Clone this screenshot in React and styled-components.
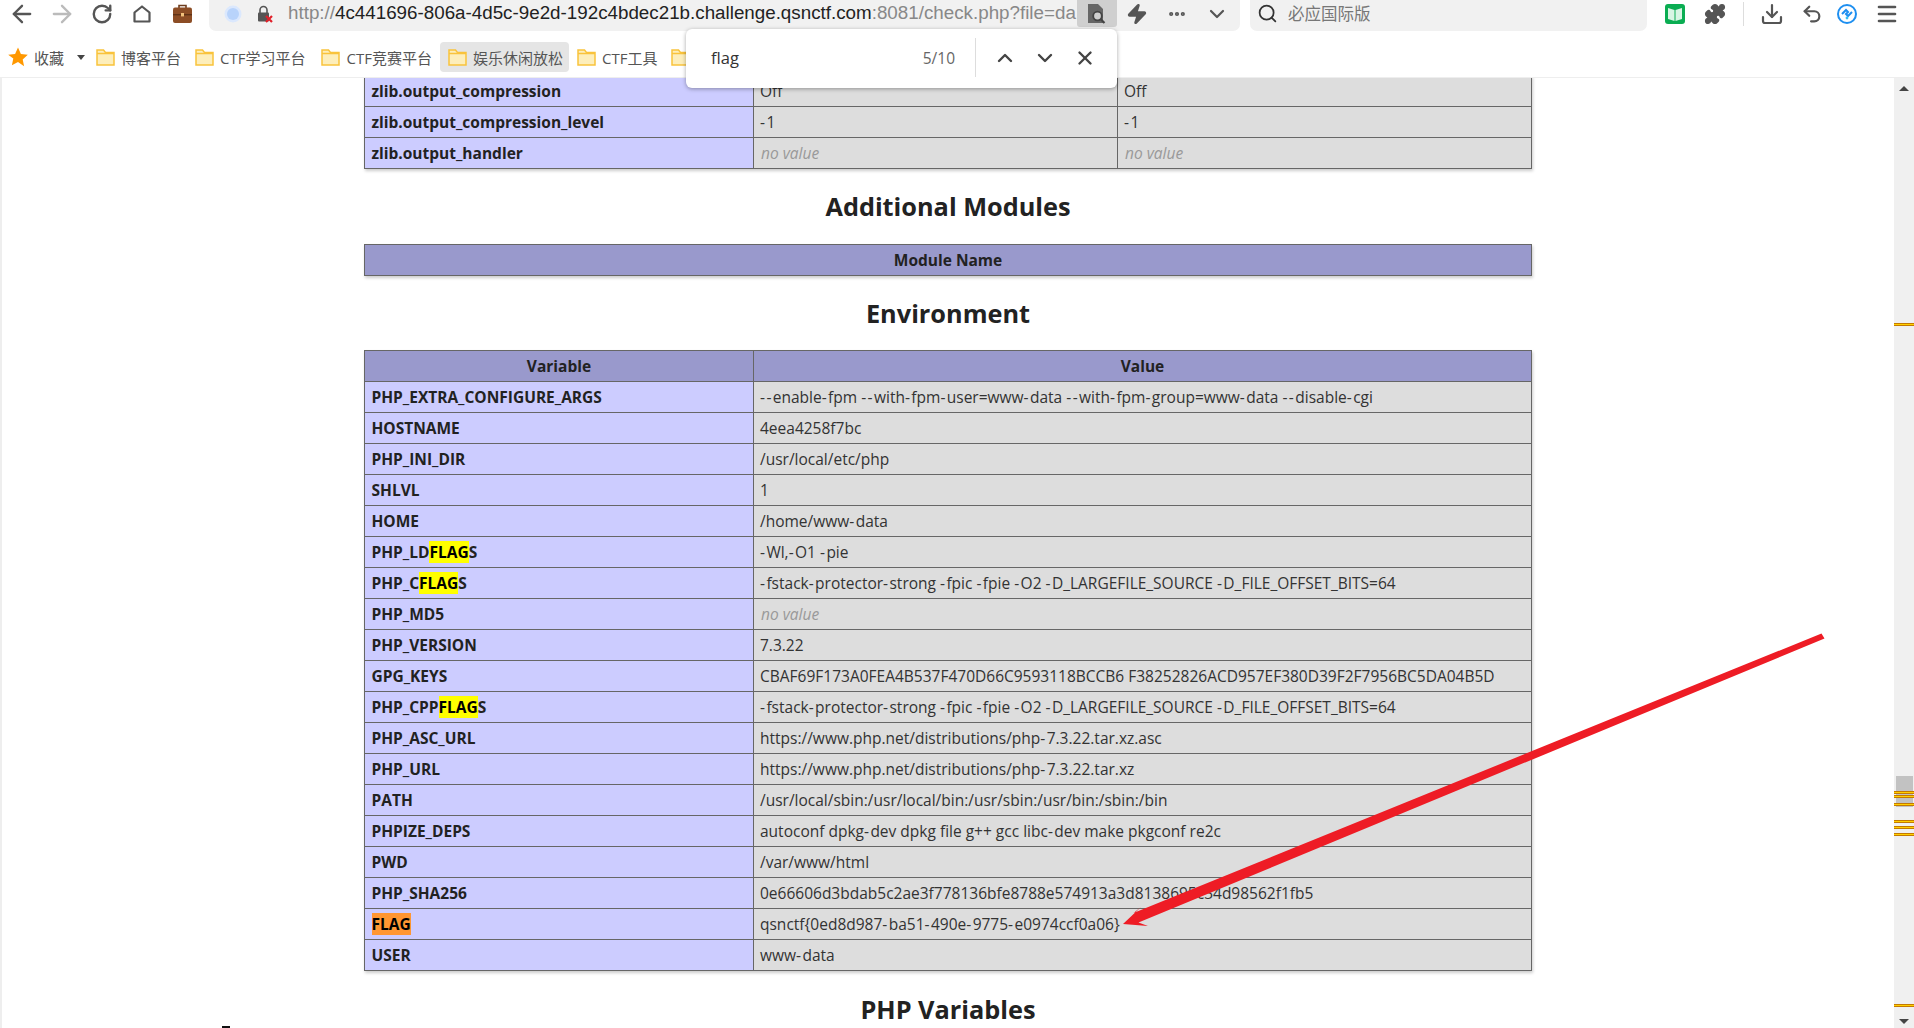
import React from "react";
import styled, { createGlobalStyle } from "styled-components";
import { ArrowLeft, ArrowRight, RotateCw, ChevronUp, ChevronDown, X, Search, Zap, Ellipsis, Download, Undo2, Menu, Puzzle } from "lucide-react";

const GlobalStyle = createGlobalStyle`
  html, body {
    margin: 0;
    height: 100%;
    overflow: hidden;
    background: #fff;
  }
  body {
    font-family: "Open Sans", "Noto Sans CJK SC", sans-serif;
    color: #222;
  }
`;

const Frame = styled.div`
  width: 1914px;
  height: 1028px;
  display: flex;
  flex-direction: column;
  position: relative;
  overflow: hidden;
`;

const Toolbar = styled.div`
  height: 31px;
  display: flex;
  align-items: flex-start;
  flex-shrink: 0;
`;

const NavButton = styled.div`
  width: 40px;
  height: 27px;
  display: flex;
  align-items: center;
  justify-content: center;
  color: ${(p) => p.$color || "#555"};
`;

const NavGroup = styled.div`
  display: flex;
  padding-left: 2px;
  width: 209px;
  box-sizing: border-box;
`;

const AddressBar = styled.div`
  width: 1031px;
  height: 31px;
  background: #f1f1f1;
  border-radius: 0 0 7px 7px;
  display: flex;
  align-items: flex-start;
  flex-shrink: 0;
`;

const SecurityIcons = styled.div`
  width: 79px;
  height: 27px;
  display: flex;
  align-items: center;
  padding-left: 15px;
  gap: 14px;
  box-sizing: border-box;
  flex-shrink: 0;
`;

const UrlText = styled.div`
  width: 789px;
  height: 27px;
  line-height: 26px;
  font-family: "Liberation Sans", sans-serif;
  font-size: 18.8px;
  white-space: nowrap;
  color: #888;
  flex-shrink: 0;
  b {
    font-weight: 400;
    color: #222;
  }
`;

const FindToggle = styled.div`
  width: 40px;
  height: 27px;
  background: #cfcfcf;
  border-radius: 0 0 3px 3px;
  display: flex;
  align-items: center;
  justify-content: center;
`;

const AddressActions = styled.div`
  display: flex;
  align-items: center;
  height: 27px;
  > div {
    width: 40px;
    display: flex;
    justify-content: center;
    color: #555;
  }
`;

const SearchBox = styled.div`
  width: 397px;
  height: 31px;
  margin-left: 10px;
  background: #f1f1f1;
  border-radius: 0 0 7px 7px;
  display: flex;
  align-items: flex-start;
  padding-left: 7px;
  box-sizing: border-box;
  gap: 10px;
  font-size: 16.5px;
  color: #777;
  line-height: 27px;
  flex-shrink: 0;
  svg {
    margin-top: 3px;
    color: #333;
  }
`;

const ExtensionIcons = styled.div`
  display: flex;
  align-items: center;
  height: 27px;
  padding-left: 8px;
  color: #555;
`;

const ExtensionSlot = styled.div`
  width: ${(p) => p.$width || 40}px;
  display: flex;
  justify-content: center;
`;

const Separator = styled.div`
  width: 1px;
  height: 24px;
  background: #ddd;
`;

const Bookmarks = styled.div`
  height: 47px;
  box-sizing: border-box;
  display: flex;
  align-items: center;
  padding: 6px 0 0 8px;
  border-bottom: 1px solid #eee;
  font-size: 15px;
  color: #555;
  flex-shrink: 0;
`;

const BookmarkLabel = styled.span`
  margin-left: 6px;
  white-space: nowrap;
`;

const Bookmark = styled.div`
  display: flex;
  align-items: center;
  height: 30px;
  padding: 0 6px 0 8px;
  margin-right: ${(p) => p.$gap ?? 0}px;
  border-radius: 4px;
  background: ${(p) => (p.$active ? "#e5e5e5" : "transparent")};
`;

const FavouritesCaret = styled.span`
  width: 0;
  height: 0;
  margin: 0 3px 0 13px;
  border-left: 4px solid transparent;
  border-right: 4px solid transparent;
  border-top: 5px solid #444;
`;

const FindBar = styled.div`
  position: absolute;
  left: 686px;
  top: 29px;
  width: 431px;
  height: 59px;
  padding-bottom: 2px;
  background: #fff;
  border-radius: 6px;
  box-shadow: 0 1px 4px rgba(0, 0, 0, 0.35);
  display: flex;
  align-items: center;
  box-sizing: border-box;
  z-index: 3;
`;

const FindInput = styled.div`
  width: 221px;
  box-sizing: border-box;
  padding-left: 25px;
  font-size: 16.5px;
  color: #333;
`;

const FindCount = styled.div`
  width: 48px;
  text-align: right;
  font-size: 15.5px;
  color: #666;
  margin-right: 20px;
`;

const FindDivider = styled.div`
  width: 1px;
  height: 39px;
  background: #ddd;
  margin-right: 9px;
`;

const FindButton = styled.div`
  width: 40px;
  display: flex;
  justify-content: center;
  color: #444;
`;

const Body = styled.div`
  flex: 1;
  display: flex;
  min-height: 0;
`;

const Page = styled.div`
  flex: 1;
  border-left: 2px solid #eee;
  overflow: hidden;
  display: flex;
  flex-direction: column;
  align-items: center;
`;

const ScrolledContent = styled.div`
  margin-top: -3px;
  width: 1168px;
`;

const Table = styled.table`
  width: 1168px;
  table-layout: fixed;
  border-collapse: collapse;
  box-shadow: 1px 2px 3px #ccc;
  font-size: 15.5px;
`;

const Heading = styled.h2`
  margin: 0;
  height: ${(p) => p.$height}px;
  line-height: ${(p) => p.$height}px;
  text-align: center;
  font-size: 25.3px;
  font-weight: 700;
  color: #222;
`;

const HeadCell = styled.th`
  height: 30px;
  padding: 0 7px;
  background: #99c;
  border: 1px solid #666;
  font-weight: 700;
  text-align: center;
  color: #222;
`;

const KeyCell = styled.td`
  height: 30px;
  padding: 0 6.5px;
  background: #ccf;
  border: 1px solid #666;
  font-weight: 700;
  color: #222;
  white-space: nowrap;
`;

const ValueCell = styled.td`
  height: 30px;
  padding: 0 6px;
  background: #ddd;
  border: 1px solid #666;
  color: #333;
  white-space: nowrap;
  overflow: hidden;
`;

const NoValue = styled.i`
  color: #999;
  padding-left: 1px;
`;

const Hyphen = styled.span`
  letter-spacing: 1.4px;
`;

const Match = styled.mark`
  background: ${(p) => (p.$current ? "#ff9632" : "#ffff00")};
  color: #000;
`;

const Scrollbar = styled.div`
  width: 20px;
  background: #f0f0f0;
  position: relative;
  flex-shrink: 0;
`;

const ScrollArrow = styled.span`
  position: absolute;
  left: 5px;
  width: 0;
  height: 0;
  border-left: 5px solid transparent;
  border-right: 5px solid transparent;
  ${(p) => (p.$down ? "bottom: 4px; border-top: 5px solid #444;" : "top: 8px; border-bottom: 5px solid #444;")}
`;

const ScrollThumb = styled.div`
  position: absolute;
  left: 2px;
  right: 1px;
  top: 698px;
  height: 31px;
  background: #c2c2c2;
`;

const ScrollMark = styled.div`
  position: absolute;
  left: 0;
  right: 0;
  height: 3px;
  background: #ffd000;
  border-top: 1px solid #c47a00;
  border-bottom: 1px solid #c47a00;
  box-sizing: border-box;
`;

const Annotation = styled.svg`
  position: absolute;
  left: 0;
  top: 0;
  pointer-events: none;
  z-index: 2;
`;

const StrayMark = styled.div`
  position: absolute;
  left: 222px;
  top: 1026px;
  width: 8px;
  height: 2px;
  background: #111;
`;

const Folder = () => (
  <svg width="19" height="17" viewBox="0 0 19 17">
    <path d="M1 1h6.5l2 2.5H18V16H1z" fill="#fdeebb" stroke="#f9c33c" strokeWidth="1.5" />
    <path d="M1 4.5h17" stroke="#f9c33c" strokeWidth="1.5" />
  </svg>
);

const FavStar = () => (
  <svg width="20" height="20" viewBox="0 0 20 20">
    <path d="M10 .5l2.9 6.4 6.9.8-5.1 4.7 1.4 6.9L10 15l-6.1 3.3 1.4-6.9L.2 7.7l6.9-.8z" fill="#ff9800" />
  </svg>
);

const Home = () => (
  <svg width="20" height="18" viewBox="0 0 20 18" fill="none" stroke="#555" strokeWidth="2.2">
    <path d="M2.5 16.5V7.5L10 1.5l7.5 6v9z" strokeLinejoin="round" />
  </svg>
);

const Briefcase = () => (
  <svg width="21" height="21" viewBox="0 0 21 21">
    <path d="M7 5V2.5h7V5" fill="none" stroke="#6d3d1e" strokeWidth="1.6" />
    <rect x="1" y="4.5" width="19" height="15.5" rx="2" fill="#8c4d25" />
    <rect x="1" y="11" width="19" height="1.4" fill="#5f3216" />
    <rect x="9" y="10" width="3" height="3.4" fill="#f1c27d" />
  </svg>
);

const ShieldDot = () => (
  <svg width="18" height="18" viewBox="0 0 18 18">
    <circle cx="9" cy="9" r="8.5" fill="#dbe8fd" />
    <circle cx="9" cy="9" r="6" fill="#b8d3fb" />
  </svg>
);

const BrokenLock = () => (
  <svg width="18" height="20" viewBox="0 0 18 20">
    <path d="M4 9V6a3.5 3.5 0 0 1 7 0v3" fill="none" stroke="#555" strokeWidth="1.6" />
    <rect x="2" y="8.5" width="11" height="9" rx="1" fill="#555" />
    <path d="M10 12l6 6M16 12l-6 6" stroke="#e0202a" strokeWidth="2.2" />
  </svg>
);

const PageSearch = () => (
  <svg width="20" height="21" viewBox="0 0 20 21">
    <path d="M1 1h10l5 5v14H1z" fill="#666" />
    <circle cx="10.5" cy="13" r="4.3" fill="#cfcfcf" stroke="#444" strokeWidth="1.8" />
    <path d="M13.5 16l4 4" stroke="#444" strokeWidth="2.2" />
  </svg>
);

const ReadingApp = () => (
  <svg width="20" height="20" viewBox="0 0 20 20">
    <rect width="20" height="20" rx="3" fill="#0aad52" />
    <path d="M3 4l6.5 2v11L3 15zM17 4l-6.5 2v11L17 15z" fill="#d8f5e4" />
  </svg>
);

const SyncBadge = () => (
  <svg width="20" height="20" viewBox="0 0 20 20">
    <circle cx="10" cy="10" r="9" fill="#fff" stroke="#1e8ff0" strokeWidth="2" />
    <path d="M5 10l4-4 2 2-2 2 2 2 4-4" fill="none" stroke="#1e8ff0" strokeWidth="2" />
    <circle cx="10" cy="14" r="1.4" fill="#35c0f5" />
  </svg>
);

const topRows = [
  ["zlib.output_compression", "Off", "Off"],
  ["zlib.output_compression_level", "-1", "-1"],
  ["zlib.output_handler", null, null],
];

const envRows = [
  ["PHP_EXTRA_CONFIGURE_ARGS", "--enable-fpm --with-fpm-user=www-data --with-fpm-group=www-data --disable-cgi"],
  ["HOSTNAME", "4eea4258f7bc"],
  ["PHP_INI_DIR", "/usr/local/etc/php"],
  ["SHLVL", "1"],
  ["HOME", "/home/www-data"],
  [<>PHP_LD<Match>FLAG</Match>S</>, "-Wl,-O1 -pie"],
  [<>PHP_C<Match>FLAG</Match>S</>, "-fstack-protector-strong -fpic -fpie -O2 -D_LARGEFILE_SOURCE -D_FILE_OFFSET_BITS=64"],
  ["PHP_MD5", null],
  ["PHP_VERSION", "7.3.22"],
  ["GPG_KEYS", "CBAF69F173A0FEA4B537F470D66C9593118BCCB6 F38252826ACD957EF380D39F2F7956BC5DA04B5D"],
  [<>PHP_CPP<Match>FLAG</Match>S</>, "-fstack-protector-strong -fpic -fpie -O2 -D_LARGEFILE_SOURCE -D_FILE_OFFSET_BITS=64"],
  ["PHP_ASC_URL", "https://www.php.net/distributions/php-7.3.22.tar.xz.asc"],
  ["PHP_URL", "https://www.php.net/distributions/php-7.3.22.tar.xz"],
  ["PATH", "/usr/local/sbin:/usr/local/bin:/usr/sbin:/usr/bin:/sbin:/bin"],
  ["PHPIZE_DEPS", "autoconf dpkg-dev dpkg file g++ gcc libc-dev make pkgconf re2c"],
  ["PWD", "/var/www/html"],
  ["PHP_SHA256", "0e66606d3bdab5c2ae3f778136bfe8788e574913a3d8138695c34d98562f1fb5"],
  [<Match $current>FLAG</Match>, "qsnctf{0ed8d987-ba51-490e-9775-e0974ccf0a06}"],
  ["USER", "www-data"],
];

const marks = [245, 713, 717, 725, 742, 748, 755, 926];

const bookmarks = [
  ["博客平台", 0],
  ["CTF学习平台", 2],
  ["CTF竞赛平台", 2],
  ["娱乐休闲放松", 0, true],
  ["CTF工具", 0],
];

// the hyphens are wider in the original font
const renderValue = (value) => {
  if (value === null) return <NoValue>no value</NoValue>;
  return value.split(/(-)/).map((part, i) => (part === "-" ? <Hyphen key={i}>-</Hyphen> : part));
};

export default function App() {
  return (
    <Frame>
      <GlobalStyle />
      <Toolbar>
        <NavGroup>
          <NavButton><ArrowLeft size={28} strokeWidth={2} /></NavButton>
          <NavButton $color="#bbb"><ArrowRight size={28} strokeWidth={2} /></NavButton>
          <NavButton><RotateCw size={22} strokeWidth={2.6} /></NavButton>
          <NavButton><Home /></NavButton>
          <NavButton><Briefcase /></NavButton>
        </NavGroup>
        <AddressBar>
          <SecurityIcons><ShieldDot /><BrokenLock /></SecurityIcons>
          <UrlText>http://<b>4c441696-806a-4d5c-9e2d-192c4bdec21b.challenge.qsnctf.com</b>:8081/check.php?file=da</UrlText>
          <FindToggle><PageSearch /></FindToggle>
          <AddressActions>
            <div><Zap size={22} fill="#555" /></div>
            <div><Ellipsis size={20} strokeWidth={3} /></div>
            <div><ChevronDown size={24} strokeWidth={2.2} /></div>
          </AddressActions>
        </AddressBar>
        <SearchBox>
          <Search size={21} strokeWidth={2} />
          <span>必应国际版</span>
        </SearchBox>
        <ExtensionIcons>
          <ExtensionSlot><ReadingApp /></ExtensionSlot>
          <ExtensionSlot><Puzzle size={22} fill="#555" /></ExtensionSlot>
          <ExtensionSlot $width={17}><Separator /></ExtensionSlot>
          <ExtensionSlot><Download size={24} strokeWidth={2.2} /></ExtensionSlot>
          <ExtensionSlot><Undo2 size={22} strokeWidth={2.4} /></ExtensionSlot>
          <ExtensionSlot $width={30}><SyncBadge /></ExtensionSlot>
          <ExtensionSlot $width={50}><Menu size={24} strokeWidth={2.6} /></ExtensionSlot>
        </ExtensionIcons>
      </Toolbar>

      <Bookmarks>
        <FavStar />
        <BookmarkLabel>收藏</BookmarkLabel>
        <FavouritesCaret />
        {bookmarks.map(([label, gap, active]) => (
          <Bookmark key={label} $gap={gap} $active={active}>
            <Folder />
            <BookmarkLabel>{label}</BookmarkLabel>
          </Bookmark>
        ))}
        <Bookmark><Folder /></Bookmark>
      </Bookmarks>

      <FindBar>
        <FindInput>flag</FindInput>
        <FindCount>5/10</FindCount>
        <FindDivider />
        <FindButton><ChevronUp size={24} strokeWidth={2.4} /></FindButton>
        <FindButton><ChevronDown size={24} strokeWidth={2.4} /></FindButton>
        <FindButton><X size={22} strokeWidth={2.6} /></FindButton>
      </FindBar>

      <Body>
        <Page>
          <ScrolledContent>
            <Table>
              <colgroup><col width="389" /><col width="364" /><col /></colgroup>
              <tbody>
                {topRows.map(([key, local, master]) => (
                  <tr key={key}>
                    <KeyCell>{key}</KeyCell>
                    <ValueCell>{renderValue(local)}</ValueCell>
                    <ValueCell>{renderValue(master)}</ValueCell>
                  </tr>
                ))}
              </tbody>
            </Table>
            <Heading $height={75}>Additional Modules</Heading>
            <Table>
              <tbody><tr><HeadCell>Module Name</HeadCell></tr></tbody>
            </Table>
            <Heading $height={74}>Environment</Heading>
            <Table>
              <colgroup><col width="389" /><col /></colgroup>
              <tbody>
                <tr><HeadCell>Variable</HeadCell><HeadCell>Value</HeadCell></tr>
                {envRows.map(([key, value], i) => (
                  <tr key={i}>
                    <KeyCell>{key}</KeyCell>
                    <ValueCell>{renderValue(value)}</ValueCell>
                  </tr>
                ))}
              </tbody>
            </Table>
            <Heading $height={76}>PHP Variables</Heading>
          </ScrolledContent>
        </Page>
        <Scrollbar>
          <ScrollArrow />
          <ScrollThumb />
          {marks.map((top) => <ScrollMark key={top} style={{ top }} />)}
          <ScrollArrow $down />
        </Scrollbar>
      </Body>

      <Annotation width="1914" height="1028" viewBox="0 0 1914 1028">
        <path d="M1824.5 638.5L1821.5 633.5L1133.5 913L1141 907L1123 924L1148 926L1138.5 922.5z" fill="#ee1c25" />
      </Annotation>
      <StrayMark />
    </Frame>
  );
}
